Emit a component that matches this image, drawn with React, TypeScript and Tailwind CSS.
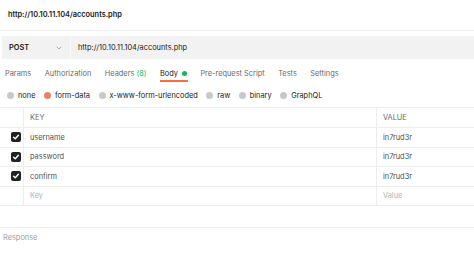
import React from "react";
import { ChevronDown } from "lucide-react";

const tabs = ["Params", "Authorization", "Headers", "Body", "Pre-request Script", "Tests", "Settings"];
const bodyTypes = ["none", "form-data", "x-www-form-urlencoded", "raw", "binary", "GraphQL"];
const rows = [
  { key: "username", value: "in7rud3r" },
  { key: "password", value: "in7rud3r" },
  { key: "confirm", value: "in7rud3r" },
];

const Check = () => (
  <div className="w-[10px] h-[10px] rounded-[2px] bg-[#212121] flex items-center justify-center">
    <svg width="8" height="8" viewBox="0 0 10 10" fill="none">
      <path d="M2 5.2 L4.1 7.2 L8 2.8" stroke="white" strokeWidth="1.8" strokeLinecap="round" strokeLinejoin="round" />
    </svg>
  </div>
);

export default function App() {
  return (
    <div className="w-[474px] h-[260px] bg-white overflow-hidden text-[7.4px] text-[#212121]" style={{ fontFamily: "Inter, 'Noto Sans', sans-serif" }}>
      {/* request title */}
      <div className="h-[31px] flex items-center px-2 font-semibold border-b border-[#f0f0f0]">
        http://10.10.11.104/accounts.php
      </div>

      {/* method + url */}
      <div className="mt-[5px] ml-[2px] h-[23px] flex bg-[#f2f2f2]">
        <div className="w-[69px] flex items-center justify-between pl-[7px] pr-[7px] border-r border-[#fafafa] font-semibold">
          <span>POST</span>
          <ChevronDown className="w-[8px] h-[8px] text-[#8a8a8a]" strokeWidth={2} />
        </div>
        <div className="flex items-center pl-[7px]">http://10.10.11.104/accounts.php</div>
      </div>

      {/* tabs */}
      <div className="mt-[3px] h-[24px] flex items-center gap-[13.5px] px-[5px] text-[#6b6b6b]">
        {tabs.map((t) =>
          t === "Body" ? (
            <div key={t} className="relative flex items-center gap-[4px] text-[#212121]">
              <span>Body</span>
              <span className="w-[5px] h-[5px] rounded-full bg-[#0cbb52]" />
              <span className="absolute left-0 right-[-1px] top-[12px] h-[2px] bg-[#ff6c37]" />
            </div>
          ) : t === "Headers" ? (
            <span key={t}>
              Headers <span className="text-[#0cbb52]">(8)</span>
            </span>
          ) : (
            <span key={t}>{t}</span>
          )
        )}
      </div>

      {/* body type radios */}
      <div className="h-[20px] flex items-center gap-[8.5px] px-[7px]">
        {bodyTypes.map((b) => (
          <div key={b} className="flex items-center gap-[4px]">
            <span className={`w-[7px] h-[7px] rounded-full ${b === "form-data" ? "bg-[#e8836a]" : "bg-[#c8c8c8]"}`} />
            <span>{b}</span>
          </div>
        ))}
      </div>

      {/* table */}
      <div className="mt-[1px] border-t border-[#ededed]">
        <div className="grid grid-cols-[24px_353px_1fr] h-[20px] border-b border-[#ededed] text-[#6b6b6b]">
          <div className="border-r border-[#ededed]" />
          <div className="flex items-center pl-[6px] border-r border-[#ededed]">KEY</div>
          <div className="flex items-center pl-[6px]">VALUE</div>
        </div>
        {rows.map((r) => (
          <div key={r.key} className="grid grid-cols-[24px_353px_1fr] h-[19.5px] border-b border-[#ededed] text-[#505050]">
            <div className="flex items-center pl-[11px] border-r border-[#ededed]">
              <Check />
            </div>
            <div className="flex items-center pl-[6px] border-r border-[#ededed]">{r.key}</div>
            <div className="flex items-center pl-[6px]">{r.value}</div>
          </div>
        ))}
        <div className="grid grid-cols-[24px_353px_1fr] h-[19.5px] border-b border-[#ededed] text-[#b5b5b5]">
          <div className="border-r border-[#ededed]" />
          <div className="flex items-center pl-[6px] border-r border-[#ededed]">Key</div>
          <div className="flex items-center pl-[6px]">Value</div>
        </div>
      </div>

      {/* response */}
      <div className="mt-[21px] border-t border-[#ededed] h-[20px] flex items-center px-[3px] text-[#a0a0a0]">
        Response
      </div>
    </div>
  );
}
